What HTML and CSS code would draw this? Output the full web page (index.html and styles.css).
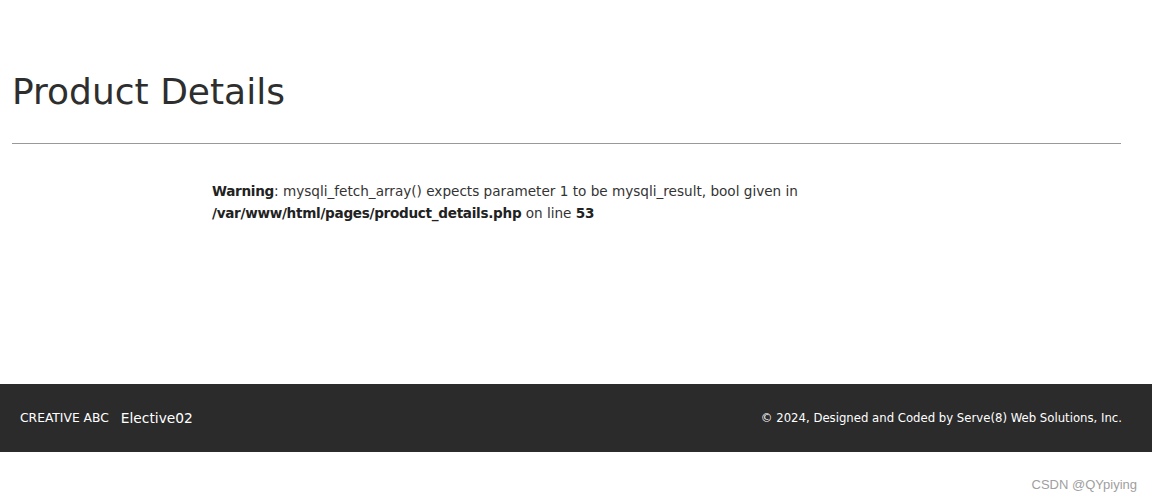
FILE: index.html
```html
<!DOCTYPE html>
<html lang="en">
  <head>
    <meta charset="UTF-8" />
    <meta name="viewport" content="width=device-width, initial-scale=1.0" />
    <title>Product Details</title>
    <link rel="stylesheet" href="styles.css">
  </head>
  <body>
    <div class="container">
      <h1>Product Details</h1>
      <hr class="divider" />
      <div class="details">
        <b>Warning</b>: mysqli_fetch_array() expects parameter 1 to be mysqli_result, bool given in <b>/var/www/html/pages/product_details.php</b> on line <b>53</b>
      </div>
    </div>
    <footer class="footer">
      <div class="brand">
        <span class="brand-name">CREATIVE ABC</span>
        <span class="brand-sub">Elective02</span>
      </div>
      <div class="copyright">&copy; 2024, Designed and Coded by Serve(8) Web Solutions, Inc.</div>
    </footer>
    <div class="watermark">CSDN @QYpiying</div>
  </body>
</html>
```

FILE: styles.css
```css
body {
  font-family: "DejaVu Sans", sans-serif;
  margin: 0;
  padding: 0;
  background-color: #ffffff;
  color: #333333;
}
.container {
  margin: 0 31px 0 12px;
  padding-top: 70px;
  height: 314px;
}
h1 {
  font-size: 36px;
  font-weight: normal;
  margin: 0;
  line-height: 44px;
  color: #2e2e2e;
}
.divider {
  border: none;
  border-top: 1px solid #999999;
  margin: 29px 0 0 0;
}
.details {
  width: 600px;
  margin: 36px 0 0 200px;
  font-size: 13.6px;
  line-height: 22px;
  color: #333333;
}
.details b {
  color: #222222;
  letter-spacing: -0.3px;
}
.footer {
  background-color: #2b2b2b;
  color: #ffffff;
  height: 68px;
  display: flex;
  align-items: center;
  justify-content: space-between;
  padding: 0 30px 0 20px;
}
.brand {
  display: flex;
  align-items: center;
  gap: 12px;
}
.brand-name {
  font-size: 12.3px;
}
.brand-sub {
  font-size: 13.8px;
}
.copyright {
  font-size: 11.7px;
}
.watermark {
  text-align: right;
  padding: 25px 15px 0 0;
  font-family: "Liberation Sans", sans-serif;
  font-size: 13px;
  color: #a0a0a0;
}
```
